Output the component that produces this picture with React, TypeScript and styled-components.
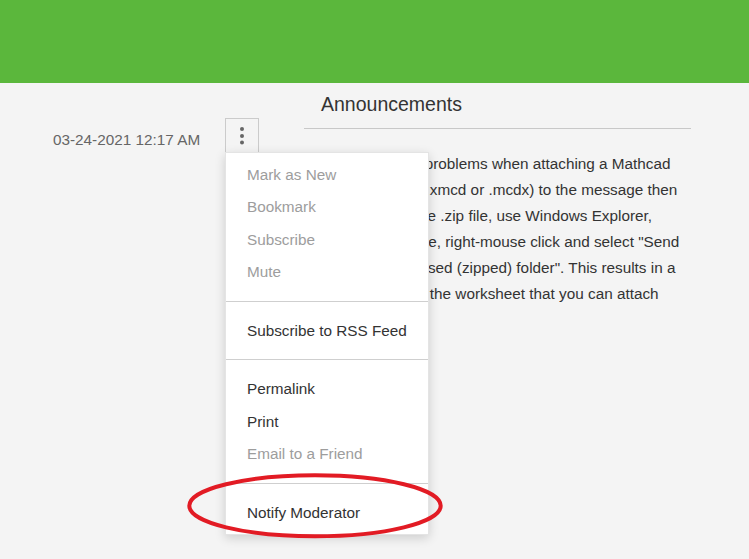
import React from "react";
import styled, { createGlobalStyle } from "styled-components";

const Global = createGlobalStyle`
  html, body { margin: 0; padding: 0; }
  body {
    background: #f4f4f4;
    font-family: "Liberation Sans", Arial, sans-serif;
    width: 749px;
    height: 559px;
    overflow: hidden;
  }
`;

const Page = styled.div`
  position: relative;
  width: 749px;
  height: 559px;
`;

const Header = styled.header`
  height: 83px;
  background: #5bb73c;
`;

const Content = styled.div`
  display: flex;
  padding-left: 53px;
`;

const MetaRow = styled.div`
  display: grid;
  grid-template-columns: 172px 34px;
  align-items: start;
  width: 251px;
  padding-top: 35px;
`;

const DateText = styled.span`
  padding-top: 13px;
  font-size: 15.3px;
  line-height: 17px;
  color: #666;
  white-space: nowrap;
`;

const MenuAnchor = styled.div`
  position: relative;
`;

const KebabButton = styled.button`
  display: flex;
  align-items: center;
  justify-content: center;
  box-sizing: border-box;
  width: 34px;
  height: 34px;
  padding: 0;
  background: transparent;
  border: 1px solid #cbcbcb;
  border-bottom: none;
  cursor: pointer;
`;

const Menu = styled.ul`
  position: absolute;
  top: 100%;
  left: 0;
  box-sizing: border-box;
  width: 204px;
  margin: 0;
  padding: 6px 0 5px;
  list-style: none;
  background: #fff;
  border: 1px solid #e4e4e4;
  box-shadow: 0 3px 10px rgba(0, 0, 0, 0.16);
  z-index: 2;
`;

const Item = styled.li<{ $disabled?: boolean }>`
  padding: 8px 21px;
  font-size: 15.3px;
  line-height: 16.3px;
  color: ${(p) => (p.$disabled ? "#9d9d9d" : "#333")};
  white-space: nowrap;
`;

const Divider = styled.li`
  height: 1px;
  margin: 12.6px 0 12.8px;
  background: #cfcfcf;
`;

const Main = styled.main`
  width: 387px;
  padding-top: 10px;
`;

const Heading = styled.h2`
  margin: 0;
  padding: 0 17px 12px;
  font-size: 19.5px;
  line-height: 22.5px;
  font-weight: normal;
  color: #333;
  border-bottom: 1px solid #c8c8c8;
`;

const Body = styled.p`
  margin: 22px 0 0;
  font-size: 15.3px;
  line-height: 26px;
  color: #333;
  white-space: nowrap;
`;

const Annotation = styled.svg`
  position: absolute;
  left: 0;
  top: 0;
  pointer-events: none;
  z-index: 3;
`;

const Dots = () => (
  <svg width="6" height="20" viewBox="0 0 6 20">
    <circle cx="3" cy="3" r="2" fill="#666" />
    <circle cx="3" cy="10" r="2" fill="#666" />
    <circle cx="3" cy="16.6" r="2" fill="#666" />
  </svg>
);

export default function App() {
  return (
    <Page>
      <Global />
      <Header />
      <Content>
        <MetaRow>
          <DateText>03-24-2021 12:17 AM</DateText>
          <MenuAnchor>
            <KebabButton aria-label="Show options">
              <Dots />
            </KebabButton>
            <Menu>
              <Item $disabled>Mark as New</Item>
              <Item $disabled>Bookmark</Item>
              <Item $disabled>Subscribe</Item>
              <Item $disabled>Mute</Item>
              <Divider />
              <Item>Subscribe to RSS Feed</Item>
              <Divider />
              <Item>Permalink</Item>
              <Item>Print</Item>
              <Item $disabled>Email to a Friend</Item>
              <Divider />
              <Item>Notify Moderator</Item>
            </Menu>
          </MenuAnchor>
        </MetaRow>
        <Main>
          <Heading>Announcements</Heading>
          <Body>
            If you experience problems when attaching a Mathcad
            <br />
            worksheet (either .xmcd or .mcdx) to the message then
            <br />
            ZIP it. To create the .zip file, use Windows Explorer,
            <br />
            navigate to your file, right-mouse click and select "Send
            <br />
            to" then "Compressed (zipped) folder". This results in a
            <br />
            .zip file containing the worksheet that you can attach
            <br />
            directly.
          </Body>
        </Main>
      </Content>
      <Annotation width="749" height="559" viewBox="0 0 749 559">
        <ellipse
          cx="315"
          cy="505.8"
          rx="125.7"
          ry="30.5"
          fill="none"
          stroke="#e21b24"
          strokeWidth="4"
        />
      </Annotation>
    </Page>
  );
}
